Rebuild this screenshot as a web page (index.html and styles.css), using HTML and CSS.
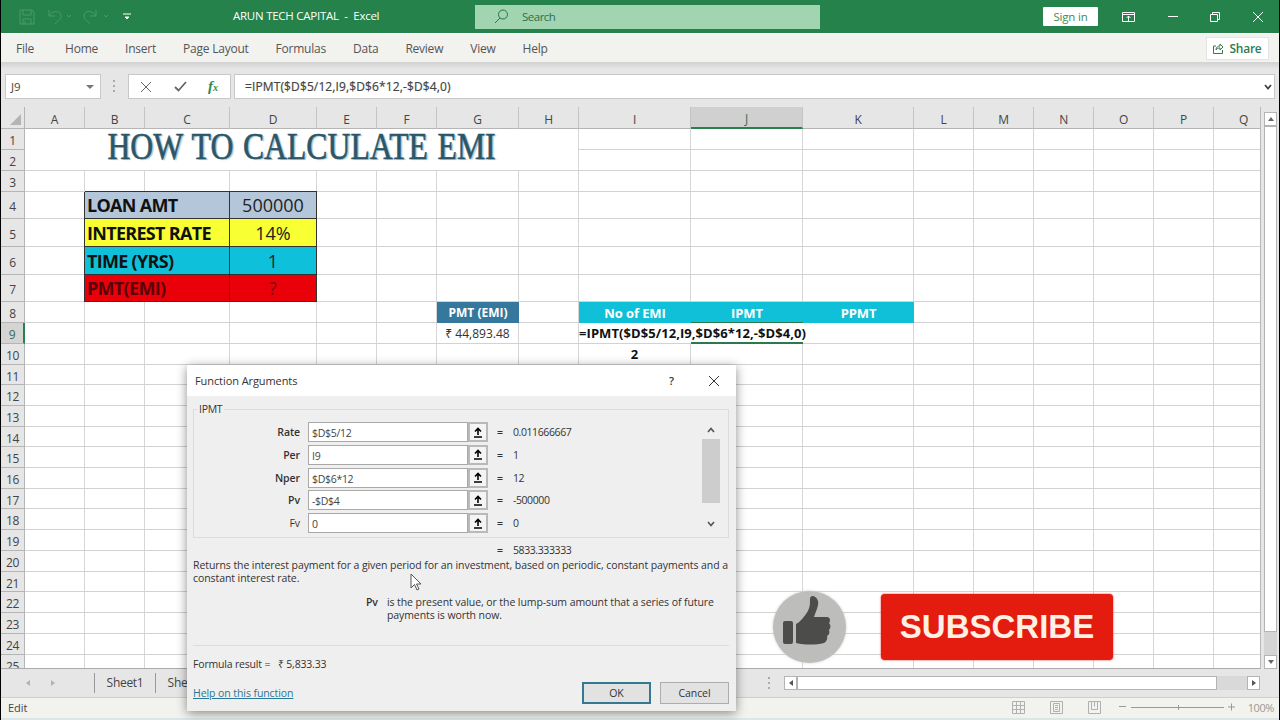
FILE: index.html
```
<!DOCTYPE html>
<html lang="en">
<head>
    <meta charset="UTF-8">
    <meta name="viewport" content="width=device-width, initial-scale=1.0">
    <title>ARUN TECH CAPITAL - Excel</title>
    <link rel="stylesheet" href="styles.css">
</head>
<body>
    <div class="window">
        <header class="titlebar">
            <div class="quick">
                <svg class="faded" width="16" height="16" viewBox="0 0 16 16"><path d="M1 1h12l2 2v12H1zM4 1v5h8V1M4 15v-5h8v5M6 12v3"/></svg>
                <svg class="faded undo" width="24" height="16" viewBox="0 0 24 16"><path d="M1 1v6h6M1 7c3-6 12-6 12 0 0 4-4 5-6 8M19 6l2 2 2-2"/></svg>
                <svg class="faded redo" width="26" height="16" viewBox="0 0 26 16"><path d="M13 1v6H7M13 7C10 1 1 1 1 7c0 4 4 5 6 8M21 6l2 2 2-2"/></svg>
                <svg class="more" width="8" height="8" viewBox="0 0 8 8"><path d="M0 1h8M2 4l2 2 2-2z"/></svg>
            </div>
            <div class="doc-title">ARUN TECH CAPITAL&nbsp; -&nbsp; Excel</div>
            <div class="search">
                <svg width="15" height="15" viewBox="0 0 15 15"><circle cx="9" cy="5.5" r="4.5"/><path d="M6 9l-5 5"/></svg>
                <span>Search</span>
            </div>
            <div class="sign-in">Sign in</div>
            <div class="win-buttons">
                <svg width="13" height="10" viewBox="0 0 13 10"><path d="M.5.5h12v9H.5zM.5 2.5h12M6.500 9V4M4.500 6l2-2 2 2"/></svg>
                <svg width="10" height="10" viewBox="0 0 10 10"><path d="M0 4.500h10"/></svg>
                <svg width="10" height="10" viewBox="0 0 10 10"><path d="M.5 2.500h7v7h-7zM2.500 2V.5h7v7H8"/></svg>
                <svg width="10" height="10" viewBox="0 0 10 10"><path d="M0 0l10 10M10 0L0 10"/></svg>
            </div>
        </header>

        <nav class="tabs">
            <span>File</span>
            <span>Home</span>
            <span>Insert</span>
            <span>Page Layout</span>
            <span>Formulas</span>
            <span>Data</span>
            <span>Review</span>
            <span>View</span>
            <span>Help</span>
            <div class="share">
                <svg width="11" height="11" viewBox="0 0 11 11"><path d="M3 3H.5v7.500h9V7M3 7c0-3 2-4 4-4V1l3 3-3 3V5C5 5 4 5.500 3 7z"/></svg>
                <b>Share</b>
            </div>
        </nav>

        <div class="formula-row">
            <div class="name-box">J9 <i class="caret"></i></div>
            <div class="dots"></div>
            <div class="fx-box">
                <svg width="12" height="12" viewBox="0 0 12 12"><path d="M1 1l10 10M11 1L1 11"/></svg>
                <svg width="13" height="11" viewBox="0 0 13 11"><path class="tick" d="M1 6l3.500 3.500L12 1"/></svg>
                <span class="fx">f<small>x</small></span>
            </div>
            <div class="formula">
                <span>=IPMT($D$5/12,I9,$D$6*12,-$D$4,0)</span>
                <svg width="8" height="6" viewBox="0 0 8 6"><path class="tick" d="M1 1l3 3.500L7 1"/></svg>
            </div>
        </div>

        <main class="sheet-area">
            <div class="sheet" id="sheet"></div>
            <div class="vscroll">
                <div class="arrow-box"><i class="arrow up"></i></div>
                <div class="vthumb"></div>
                <div class="vtrack"></div>
                <div class="arrow-box"><i class="arrow down"></i></div>
            </div>
        </main>

        <div class="sheet-tabs">
            <div class="tab-nav"><i class="arrow left"></i><i class="arrow right"></i></div>
            <span class="sheet-tab">Sheet1</span>
            <span class="sheet-tab">Sheet2</span>
            <div class="dots"></div>
            <div class="hscroll">
                <div class="arrow-box"><i class="arrow left"></i></div>
                <div class="hthumb"></div>
                <div class="htrack"></div>
                <div class="arrow-box"><i class="arrow right"></i></div>
            </div>
        </div>

        <footer class="status">
            <span>Edit</span>
            <div class="views">
                <svg width="13" height="13" viewBox="0 0 13 13"><path d="M.5.5h12v12H.5zM.5 4.500h12M.5 8.500h12M4.500.5v12M8.500.5v12"/></svg>
                <svg width="13" height="13" viewBox="0 0 13 13"><path d="M.5.5h12v12H.5zM3.500 2.500h6v8h-6zM5 4.500h3M5 6.500h3M5 8.500h3"/></svg>
                <svg width="13" height="13" viewBox="0 0 13 13"><path d="M.5.5h12v12H.5zM3.500.5v8h6v-8M6.500.5v5"/></svg>
            </div>
            <div class="zoom">
                <svg width="116" height="10" viewBox="0 0 116 10"><path d="M0 4.500h7M12 5.500h93M59.500 3v5M109 5h7M112.500 1.500v7"/></svg>
                <span>100%</span>
            </div>
        </footer>

        <section class="dialog">
            <div class="dialog-title">
                <span>Function Arguments</span>
                <b>?</b>
                <svg width="10" height="10" viewBox="0 0 10 10"><path d="M0 0l10 10M10 0L0 10"/></svg>
            </div>
            <div class="args">
                <div class="legend">IPMT</div>
                <div class="arg-list" id="args"></div>
                <div class="arg-scroll">
                    <svg width="8" height="6" viewBox="0 0 8 6"><path d="M1 5l3-3.500L7 5"/></svg>
                    <div class="arg-thumb"></div>
                    <svg width="8" height="6" viewBox="0 0 8 6"><path d="M1 1l3 3.500L7 1"/></svg>
                </div>
            </div>
            <div class="result"><b>=</b><span>5833.333333</span></div>
            <p class="about">Returns the interest payment for a given period for an investment, based on periodic, constant payments and a<br>constant interest rate.</p>
            <div class="arg-help">
                <b>Pv</b>
                <p>is the present value, or the lump-sum amount that a series of future<br>payments is worth now.</p>
            </div>
            <div class="formula-result">Formula result =&nbsp;&nbsp; ₹ 5,833.33</div>
            <div class="dialog-foot">
                <a class="help-link">Help on this function</a>
                <div class="btn primary">OK</div>
                <div class="btn">Cancel</div>
            </div>
        </section>

        <svg class="cursor" width="13" height="19" viewBox="0 0 13 19"><path d="M1 1v14l3.500-3.500L7 17l2-1-2.500-5H11z"/></svg>

        <div class="like">
            <svg width="49" height="51" viewBox="0 0 49 51"><rect x="1" y="26" width="10" height="23" rx="2"/><path d="M14 29c4-2 7-6 10-10 3-4 4-8 4-12 0-4 0-6 3-6 4 1 6 5 5 9-1 5-3 8-4 12h13c3 0 4 4 2 6 2 2 2 5 0 7 1 3 0 5-2 6 1 3-1 6-3 7-8 2-19 2-28 0z"/></svg>
        </div>
        <div class="subscribe"><span>SUBSCRIBE</span></div>
    </div>
    <script src="script.js"></script>
</body>
</html>
```
FILE: styles.css
```
* {
    box-sizing: border-box;
}

body {
    margin: 0;
    width: 1280px;
    height: 720px;
    overflow: hidden;
    background: #000;
    font-family: "Open Sans", "Noto Sans", sans-serif;
    font-size: 12px;
    color: #444;
}

p {
    margin: 0;
}

svg {
    display: block;
    fill: none;
    stroke: currentColor;
    flex: none;
}

.window {
    position: relative;
    width: 1278px;
    height: 720px;
    margin-left: 1px;
    display: flex;
    flex-direction: column;
    background: #e6e6e6;
}

/* title bar */
.titlebar {
    height: 33px;
    display: flex;
    align-items: center;
    background: #24824a;
    color: #fff;
}

.quick {
    display: flex;
    align-items: center;
    width: 232px;
    padding-left: 18px;
}

.faded {
    color: #4a9a68;
}

.undo {
    margin-left: 13px;
}

.redo {
    margin-left: 11px;
}

.quick .more {
    margin-left: 14px;
    fill: #fff;
}

.doc-title {
    width: 242px;
    padding-bottom: 2px;
    font-size: 11.5px;
    letter-spacing: -0.25px;
}

.search {
    width: 345px;
    height: 24px;
    display: flex;
    align-items: center;
    padding-left: 19px;
    gap: 13px;
    background: #a1d5b2;
    color: #2b7148;
    font-size: 11.5px;
    letter-spacing: -0.5px;
}

.sign-in {
    width: 55px;
    height: 19px;
    margin-left: 223px;
    background: #fff;
    border-radius: 1px;
    color: #3f8a5c;
    font-size: 11.5px;
    letter-spacing: -0.2px;
    line-height: 19px;
    text-align: center;
}

.win-buttons {
    display: flex;
    align-items: center;
    justify-content: space-between;
    width: 141px;
    margin-left: 24px;
}

/* ribbon tabs */
.tabs {
    height: 30px;
    display: flex;
    align-items: center;
    background: #f2f2ef;
    border-bottom: 1px solid #d3d3d3;
    border-top: 1px solid #fff;
    padding-left: 15px;
    gap: 27px;
    color: #555;
    letter-spacing: -0.23px;
}

.tabs span:first-child {
    margin-right: 4px;
}

.share {
    width: 63px;
    height: 23px;
    margin: 0 10px 0 auto;
    display: flex;
    align-items: center;
    justify-content: center;
    gap: 5px;
    background: #fff;
    border: 1px solid #e4e4e4;
    color: #2f7a4f;
}

.share b {
    font-weight: 600;
}

/* formula bar */
.formula-row {
    height: 44px;
    padding: 11px 4px 8px;
    display: flex;
    background: linear-gradient(#d4d4d4, #e6e6e6 6px);
}

.name-box, .fx-box, .formula {
    height: 25px;
    display: flex;
    align-items: center;
    background: #fff;
    border: 1px solid #c8c8c8;
}

.name-box {
    width: 96px;
    padding: 0 6px 0 5px;
    justify-content: space-between;
    font-size: 11.5px;
}

.caret {
    border: 4px solid transparent;
    border-top-color: #777;
    border-bottom: 0;
}

.dots {
    width: 2px;
    height: 12px;
    margin: 6px 13px 0 12px;
    background: repeating-linear-gradient(#aaa 0 2px, transparent 2px 5px);
}

.fx-box {
    width: 103px;
    padding: 0 12px 0 11px;
    justify-content: space-between;
    color: #666;
}

.tick {
    stroke-width: 1.8;
}

.fx {
    font: italic 600 15px "Liberation Serif", serif;
    color: #2c8a55;
}

.fx small {
    font-size: 10px;
}

.formula {
    flex: 1;
    margin-left: 3px;
    padding: 0 2px 0 10px;
    justify-content: space-between;
    letter-spacing: 0.12px;
    -webkit-text-stroke: 0.2px #444;
}

/* cells */
.sheet-area {
    height: 562px;
    display: flex;
}

.sheet {
    width: 1260px;
    height: 562px;
    display: grid;
    overflow: hidden;
    grid-template-columns: 24px 60px 60px 85px 87px 60px 60px 82px 60px 112px 112px 111px 60px 60px 60px 60px 60px 60px;
    grid-template-rows: 22px 21px 21px 21px 27px 28px 28px 27px 21px 21px 21px 20px 21px 21px 20px 21px 21px 20px 21px 21px 21px 20px 21px 21px 21px 20px;
    background: #fff;
    border-bottom: 1px solid #ababab;
    border-right: 1px solid #b9b9b9;
}

.cell {
    min-width: 0;
    min-height: 0;
    border-right: 1px solid #d6d6d6;
    border-bottom: 1px solid #d2d2d2;
    display: flex;
    align-items: center;
    justify-content: center;
    white-space: nowrap;
    color: #333;
}

.head {
    background: #e6e6e6;
    border-color: #b5b5b5;
    padding-top: 3px;
    color: #444;
    font-size: 12px;
    letter-spacing: -0.3px;
}

.head.col {
    border-right-color: #c4c4c4;
}

.head.active {
    background: #d0d0d0;
    border-bottom: 2px solid #24824a;
    color: #3c6b50;
}

.head.row-active {
    background: #d4d4d4;
    border-right: 2px solid #24824a;
    color: #3c6b50;
}

.corner {
    align-items: flex-end;
    justify-content: flex-end;
    padding: 0 3px 3px 0;
}

.corner::after {
    content: "";
    border-left: 11px solid transparent;
    border-bottom: 11px solid #b4b4b4;
}

.title {
    grid-column: span 8;
    grid-row: span 2;
    padding: 0 0 5px 0;
    overflow: hidden;
}

.title span {
    font-family: "Liberation Serif", serif;
    font-size: 37px;
    line-height: 36px;
    color: #2c5668;
    -webkit-text-stroke: 0.6px #2c5668;
    text-shadow: 2px 1px 1px #a5cbd8;
    word-spacing: 2px;
    transform: scaleX(0.857);
}

.loan, .rate, .time, .emi {
    border-color: #333;
    font-size: 18px;
    color: #222;
}

.loan {
    background: #b4c6da;
    box-shadow: 0 -1px #333;
}

.rate {
    background: #f8ff33;
}

.time {
    background: #0fc0da;
}

.emi {
    background: #ea0009;
    color: #7a0c0c;
}

.label {
    grid-column: span 2;
    justify-content: flex-start;
    padding-left: 2px;
    font-weight: 700;
    letter-spacing: -0.7px;
    color: #111;
    box-shadow: -1px 0 #333;
}

.loan.label {
    box-shadow: -1px 0 #333, 0 -1px #333;
}

.emi.label {
    color: #560508;
}

.blue, .cyan {
    border: 0;
    color: #fff;
    font-weight: 700;
}

.blue {
    background: #35789d;
}

.cyan {
    background: #10c0d8;
    font-size: 13px;
    letter-spacing: -0.1px;
}

.bold {
    font-weight: 700;
    color: #111;
    font-size: 13px;
}

.editing {
    position: relative;
    z-index: 1;
    justify-content: flex-start;
    font-weight: 700;
    font-size: 13px;
    letter-spacing: 0.07px;
    color: #111;
    border-right: 0;
}

.selected {
    border-bottom: 2px solid #2c7a4b;
    box-shadow: 0 -1px #2c7a4b;
    border-right: 0;
}

.vscroll {
    width: 18px;
    padding: 5px 2px 0 3px;
    display: flex;
    flex-direction: column;
}

.arrow-box {
    width: 13px;
    height: 14px;
    flex: none;
    display: flex;
    align-items: center;
    justify-content: center;
    background: #fff;
    border: 1px solid #b4b4b4;
}

.arrow {
    border: 3px solid transparent;
}

.up {
    border-bottom: 4px solid #666;
    border-top: 0;
}

.down {
    border-top: 4px solid #666;
    border-bottom: 0;
}

.left {
    border-right: 4px solid #555;
    border-left: 0;
}

.right {
    border-left: 4px solid #555;
    border-right: 0;
}

.vthumb {
    height: 507px;
    background: #fff;
    border: 1px solid #b4b4b4;
}

.vtrack {
    height: 23px;
    background: #d4d4d4;
}

/* sheet tabs and status bar */
.sheet-tabs {
    height: 28px;
    display: flex;
    align-items: center;
    background: #e6e6e6;
}

.tab-nav {
    width: 93px;
    padding: 0 39px 0 25px;
    display: flex;
    justify-content: space-between;
    opacity: 0.35;
}

.sheet-tab {
    width: 61px;
    height: 20px;
    border-left: 1px solid #999;
    text-align: center;
    line-height: 19px;
    letter-spacing: -0.3px;
}

.sheet-tabs .dots {
    margin: 0 14px 0 552px;
}

.hscroll {
    display: flex;
    width: 476px;
}

.hthumb {
    width: 420px;
    height: 14px;
    background: #fff;
    border: 1px solid #b4b4b4;
}

.htrack {
    flex: 1;
    background: #d9d9d9;
}

.status {
    height: 23px;
    display: flex;
    align-items: center;
    background: #f2f2ee;
    border-top: 1px solid #cfcfcf;
    border-bottom: 2px solid #dce6e6;
    padding: 0 5px 2px 7px;
    font-size: 11px;
}

.views {
    display: flex;
    gap: 25px;
    margin-left: auto;
    color: #b0b0b0;
}

.zoom {
    display: flex;
    align-items: center;
    gap: 13px;
    margin-left: 18px;
    color: #999;
    letter-spacing: -0.4px;
}

/* function arguments dialog */
.dialog {
    position: absolute;
    z-index: 2;
    left: 186px;
    top: 365px;
    width: 549px;
    height: 346px;
    background: #efefef;
    box-shadow: 0 2px 10px rgba(0, 0, 0, 0.45);
    padding: 0 7px 0 6px;
    font-size: 10.5px;
    letter-spacing: -0.08px;
    color: #333;
}

.dialog-title {
    height: 31px;
    margin: 0 -7px 0 -6px;
    padding: 0 17px 0 8px;
    display: flex;
    align-items: center;
    background: #fff;
    font-size: 11px;
}

.dialog-title b {
    margin: 0 35px 0 auto;
    font-weight: 600;
}

.args {
    height: 129px;
    margin-top: 13px;
    border: 1px solid #dcdcdc;
    display: flex;
    padding: 12px 7px 0 0;
    position: relative;
}

.legend {
    position: absolute;
    left: 3px;
    top: -8px;
    padding: 0 2px;
    background: #efefef;
    line-height: 15px;
    letter-spacing: -0.3px;
}

.arg-list {
    width: 508px;
    display: flex;
    flex-direction: column;
    gap: 2.75px;
}

.arg {
    height: 20px;
    display: flex;
    align-items: center;
}

.arg label {
    width: 106px;
    text-align: right;
    font-weight: 600;
}

.arg label.optional {
    font-weight: 400;
}

.arg input {
    width: 160px;
    height: 20px;
    margin-left: 8px;
    padding: 2px 3px 0;
    border: 1px solid #a9a9a9;
    background: #fff;
    font: inherit;
    letter-spacing: -0.3px;
    color: #444;
}

.pick {
    width: 20px;
    height: 20px;
    border: 2px solid #b9b9b9;
    background: #f4f4f4;
    display: flex;
    align-items: center;
    justify-content: center;
    color: #000;
}

.arg b, .result b {
    margin: 0 10px 0 9px;
    font-weight: 600;
}

.arg span, .result span {
    letter-spacing: -0.4px;
}

.arg-scroll {
    width: 18px;
    height: 109px;
    padding: 5px 0 3px;
    display: flex;
    flex-direction: column;
    align-items: center;
    color: #555;
    stroke-width: 1.6;
}

.arg-thumb {
    width: 18px;
    height: 64px;
    margin: 6px 0 18px;
    background: #cdcdcd;
}

.result {
    display: flex;
    height: 14px;
    margin: 5px 0 0 295px;
    line-height: 14px;
}

.about {
    margin-top: 2px;
    line-height: 13px;
    white-space: nowrap;
}

.arg-help {
    height: 50px;
    margin-top: 11px;
    padding-left: 173px;
    display: flex;
    gap: 9px;
    line-height: 13px;
    border-bottom: 1px solid #dcdcdc;
    white-space: nowrap;
}

.arg-help b {
    font-weight: 600;
}

.formula-result {
    margin-top: 11px;
    line-height: 15px;
    letter-spacing: -0.18px;
}

.dialog-foot {
    display: flex;
    align-items: center;
    margin-top: 10px;
    gap: 9px;
}

.help-link {
    margin-right: auto;
    color: #2a7696;
    text-decoration: underline;
}

.btn {
    width: 69px;
    height: 22px;
    border: 1px solid #adadad;
    background: #e2e2e2;
    line-height: 20px;
    text-align: center;
}

.primary {
    border: 2px solid #35788f;
    line-height: 18px;
}

/* overlays */
.cursor {
    position: absolute;
    z-index: 3;
    left: 409px;
    top: 573px;
    fill: #fff;
    color: #555;
}

.like {
    position: absolute;
    left: 772px;
    top: 591px;
    width: 73px;
    height: 72px;
    border-radius: 50%;
    background: #bdbdbb;
    padding: 4px 0 0 9px;
    box-shadow: 0 0 3px #ccc;
}

.like svg {
    fill: #4c4c4b;
    stroke: none;
}

.subscribe {
    position: absolute;
    left: 880px;
    top: 594px;
    width: 232px;
    height: 66px;
    border-radius: 4px;
    background: #e41c10;
    box-shadow: 0 0 2px #e41c10;
    display: flex;
    align-items: center;
    justify-content: center;
}

.subscribe span {
    font: 700 33px "Liberation Sans", sans-serif;
    color: #fff0e4;
}
```
FILE: script.js
```
const columns = 'ABCDEFGHIJKLMNOPQ'.split('');

// cell address -> [text, classes]
const cells = {
    A1: ['HOW TO CALCULATE EMI', 'title'],
    B4: ['LOAN AMT', 'loan label'],
    D4: ['500000', 'loan'],
    B5: ['INTEREST RATE', 'rate label'],
    D5: ['14%', 'rate'],
    B6: ['TIME (YRS)', 'time label'],
    D6: ['1', 'time'],
    B7: ['PMT(EMI)', 'emi label'],
    D7: ['?', 'emi'],
    G8: ['PMT (EMI)', 'blue'],
    G9: ['₹ 44,893.48', 'money'],
    I8: ['No of EMI', 'cyan'],
    J8: ['IPMT', 'cyan'],
    K8: ['PPMT', 'cyan'],
    I9: ['=IPMT($D$5/12,I9,$D$6*12,-$D$4,0)', 'editing'],
    J9: ['', 'selected'],
    I10: ['2', 'bold']
};

const args = [
    ['Rate', '$D$5/12', '0.011666667'],
    ['Per', 'I9', '1'],
    ['Nper', '$D$6*12', '12'],
    ['Pv', '-$D$4', '-500000'],
    ['Fv', '0', '0']
];

function cell(text, classes) {
    return `<div class="cell ${classes}"><span>${text}</span></div>`;
}

// true for cells covered by a merged neighbour
function isCovered(col, row) {
    if (row <= 2 && col <= 'H') return !(col === 'A' && row === 1);
    return col === 'C' && row >= 4 && row <= 7;
}

let html = cell('', 'head corner');
columns.forEach(col => {
    html += cell(col, 'head col' + (col === 'J' ? ' active' : ''));
});

for (let row = 1; row <= 25; row++) {
    html += cell(row, 'head' + (row === 9 ? ' row-active' : ''));
    columns.forEach(col => {
        if (isCovered(col, row)) return;
        const [text, classes] = cells[col + row] || ['', ''];
        html += cell(text, classes);
    });
}
document.getElementById('sheet').innerHTML = html;

document.getElementById('args').innerHTML = args.map(([name, value, result]) => `
    <div class="arg">
        <label class="${name === 'Fv' ? 'optional' : ''}">${name}</label>
        <input type="text" value="${value}">
        <div class="pick"><svg width="10" height="11" viewBox="0 0 10 11" stroke-width="1.600"><path d="M5 8V1.500M2 4.500l3-3 3 3M1 10h8"/></svg></div>
        <b>=</b><span>${result}</span>
    </div>`).join('');
```
